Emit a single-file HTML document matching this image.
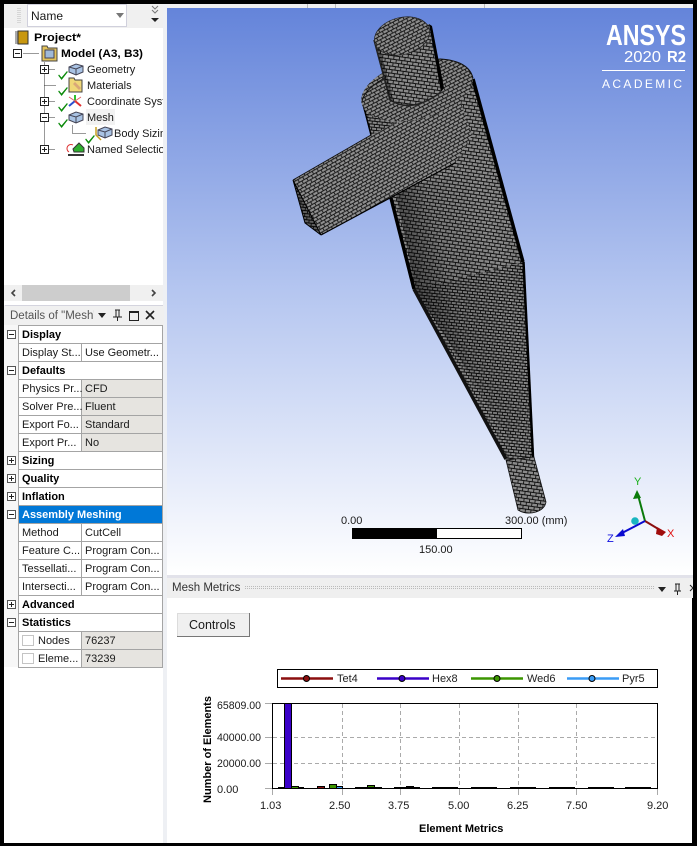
<!DOCTYPE html>
<html><head><meta charset="utf-8"><style>
html,body{margin:0;padding:0;background:#000;width:697px;height:846px;overflow:hidden}
svg{display:block}
text{font-family:"Liberation Sans",sans-serif;font-size:11px;fill:#1a1a1a}
.b{font-weight:bold;fill:#000}
</style></head><body>
<svg width="697" height="846" viewBox="0 0 697 846" xmlns="http://www.w3.org/2000/svg">
<defs>
<linearGradient id="bg" x1="0" y1="0" x2="0" y2="1"><stop offset="0" stop-color="#6484da"/><stop offset=".5" stop-color="#b5c6f0"/><stop offset="1" stop-color="#ffffff"/></linearGradient>
<pattern id="m" width="5.5" height="6.4" patternUnits="userSpaceOnUse" patternTransform="rotate(-14)">
<rect width="5.5" height="6.4" fill="#8c8c8c"/><rect width="5.5" height=".9" fill="#111"/><rect y="3.2" width="5.5" height=".9" fill="#111"/><rect x="0" width=".9" height="3.2" fill="#111"/><rect x="2.700" y="3.200" width=".9" height="3.200" fill="#111"/></pattern>
<pattern id="mc" width="5.6" height="7" patternUnits="userSpaceOnUse" patternTransform="rotate(8)">
<rect width="5.6" height="7" fill="#8a8a8a"/><rect width="5.6" height="1" fill="#111"/><rect y="3.5" width="5.6" height="1" fill="#111"/><rect x="0" width=".9" height="3.5" fill="#111"/><rect x="2.800" y="3.500" width=".9" height="3.500" fill="#111"/></pattern>
<pattern id="mi" width="5.5" height="6.4" patternUnits="userSpaceOnUse" patternTransform="rotate(-30)">
<rect width="5.5" height="6.4" fill="#8f8f8f"/><rect width="5.5" height=".9" fill="#111"/><rect y="3.2" width="5.5" height=".9" fill="#111"/><rect x="0" width=".9" height="3.2" fill="#111"/><rect x="2.700" y="3.200" width=".9" height="3.200" fill="#111"/></pattern>
<pattern id="md" width="5" height="6" patternUnits="userSpaceOnUse" patternTransform="rotate(6)">
<rect width="5" height="6" fill="#868686"/><rect width="5" height="1" fill="#0c0c0c"/><rect y="3" width="5" height="1" fill="#0c0c0c"/><rect x="0" width=".9" height="3" fill="#0c0c0c"/><rect x="2.500" y="3" width=".9" height="3" fill="#0c0c0c"/></pattern>
<linearGradient id="sh" gradientUnits="userSpaceOnUse" x1="395" y1="230" x2="525" y2="195"><stop offset="0" stop-color="#000" stop-opacity=".5"/><stop offset=".3" stop-color="#000" stop-opacity=".12"/><stop offset=".7" stop-color="#000" stop-opacity="0"/><stop offset="1" stop-color="#000" stop-opacity=".15"/></linearGradient>
<clipPath id="tree"><rect x="4" y="28" width="159" height="256"/></clipPath>
<clipPath id="dh"><rect x="8" y="305" width="86" height="20"/></clipPath>
<g id="chk"><path d="M0 3.5 L2.5 6.5 L8 0 L8.8 1 L2.6 9 L-.8 4.5Z" fill="#0a8a0a"/></g>
<g id="cube"><path d="M1 3 L8 0 L15 2 L15 8 L8 11 L1 8Z" fill="#a9c3e4" stroke="#445" stroke-width="1"/><path d="M1 3 L8 5 L15 2 M8 5 V11" fill="none" stroke="#445"/></g>
<g id="plus"><rect x=".5" y=".5" width="8" height="8" fill="#fff" stroke="#222"/><path d="M2 4.5H7M4.5 2V7" stroke="#222"/></g>
<g id="minus"><rect x=".5" y=".5" width="8" height="8" fill="#fff" stroke="#222"/><path d="M2 4.5H7" stroke="#222"/></g>
<g id="dplus"><rect x=".5" y=".5" width="8" height="8" fill="#fff" stroke="#555"/><path d="M2 4.5H7M4.5 2V7" stroke="#222"/></g>
<g id="dminus"><rect x=".5" y=".5" width="8" height="8" fill="#fff" stroke="#555"/><path d="M2 4.5H7" stroke="#222"/></g>
</defs>

<!-- frame -->
<rect width="697" height="846" fill="#000"/>
<!-- left panel -->
<rect x="4" y="4" width="163" height="839" fill="#fff"/>
<rect x="4" y="4" width="160" height="24" fill="#f0f0f0"/>
<rect x="27.500" y="4.500" width="99" height="22" fill="#fff" stroke="#d0d0dc"/>
<text x="31" y="20" style="font-size:12px">Name</text>
<path d="M116 13h8l-4 5z" fill="#777"/>
<path d="M18 8v16M20 8v16" stroke="#bbb" stroke-dasharray="1 1"/>
<path d="M152 6l3 3 3-3M152 10l3 3 3-3" fill="none" stroke="#777"/>
<path d="M151 18h8l-4 4z" fill="#222"/>
<rect x="163" y="4" width="4" height="839" fill="#eef0f4"/>

<!-- tree -->
<g clip-path="url(#tree)">
<path d="M44 58V145M23 53H39M49 69H54M44 85H56M49 101H54M49 117H54M49 149H54M72 125V133H86" stroke="#333" stroke-dasharray="1 1" fill="none" transform="translate(.5 .5)"/>
<rect x="15" y="31" width="3" height="13" fill="#aaa"/><rect x="18" y="31" width="10" height="13" fill="#c8970f" stroke="#333"/>
<text x="34" y="41" class="b" textLength="47" lengthAdjust="spacingAndGlyphs">Project*</text>
<use href="#minus" x="13" y="49"/>
<path d="M42 46h5l1 2h9v13H42z" fill="#e3c25a" stroke="#444"/><rect x="45" y="50" width="9" height="8" fill="#9fb9d8" stroke="#445"/>
<text x="61" y="57" class="b" textLength="82" lengthAdjust="spacingAndGlyphs">Model (A3, B3)</text>
<use href="#plus" x="40" y="65"/><use href="#chk" x="59" y="71"/><use href="#cube" x="68" y="64"/>
<text x="87" y="73">Geometry</text>
<use href="#chk" x="59" y="87"/><path d="M69 78h5l1 2h7v12H69z" fill="#f0d878" stroke="#444"/><path d="M73 84l6 6 2-2-6-6z" fill="#d9a878"/>
<text x="87" y="89">Materials</text>
<use href="#plus" x="40" y="97"/><use href="#chk" x="59" y="103"/>
<path d="M75 101V95" stroke="#2ec02e" stroke-width="2"/><path d="M75 101L69 106" stroke="#2b4fd0" stroke-width="2"/><path d="M75 101L81 106" stroke="#e03030" stroke-width="2"/><path d="M75 101L69 97M75 101L81 97" stroke="#d66" stroke-width="1"/>
<text x="87" y="105">Coordinate Syst</text>
<rect x="86" y="109" width="29" height="16" fill="#f2f2f2"/>
<use href="#minus" x="40" y="113"/><use href="#chk" x="59" y="119"/><use href="#cube" x="68" y="112"/>
<text x="87" y="121">Mesh</text>
<use href="#chk" x="86" y="135"/><path d="M96 127v8l5 5" fill="none" stroke="#c8a020" stroke-width="1.5"/><use href="#cube" x="97" y="127"/>
<text x="114" y="137">Body Sizing</text>
<use href="#plus" x="40" y="145"/>
<path d="M73 149l6-6 5 5v4H74z" fill="#2eae2e" stroke="#333"/><path d="M69 152a4 4 0 0 1 4-7" fill="none" stroke="#d33"/><path d="M68 155h16" stroke="#333" stroke-width="2"/>
<text x="87" y="153">Named Selection</text>
</g>

<!-- scrollbar -->
<rect x="4" y="285" width="159" height="16" fill="#f0f0f0"/>
<rect x="22" y="285" width="108" height="16" fill="#cdcdcd"/>
<path d="M15 290l-3 3 3 3M152 290l3 3-3 3" fill="none" stroke="#444" stroke-width="1.6"/>

<!-- details header -->
<rect x="4" y="305" width="160" height="20" fill="#f0f0f0"/>
<path d="M5 305.500H163" stroke="#d4d4de"/>
<g clip-path="url(#dh)"><text x="10" y="319" style="fill:#555;font-size:11.5px">Details of "Mesh"</text></g>
<path d="M98 313h8l-4 5z" fill="#222"/>
<path d="M115 310h5M116 310v7h3v-7M113 317h9M117.500 317v4" fill="none" stroke="#222"/>
<rect x="129.500" y="311.500" width="9" height="9" fill="none" stroke="#222"/><path d="M129 312.500h10" stroke="#222"/>
<path d="M146 311l8 8M154 311l-8 8" stroke="#222" stroke-width="1.6"/>
<rect x="4" y="325" width="14" height="342" fill="#f7f7f7"/>

<!-- details table -->
<g>
<rect x="18" y="325" width="145" height="342" fill="#fff"/>
<rect x="81" y="379" width="82" height="72" fill="#e6e4e0"/>
<rect x="81" y="631" width="82" height="36" fill="#e6e4e0"/>
<rect x="18" y="505" width="145" height="18" fill="#0078d7"/>
<path d="M18 325.500H163M18 343.500H163M18 361.500H163M18 379.500H163M18 397.500H163M18 415.500H163M18 433.500H163M18 451.500H163M18 469.500H163M18 487.500H163M18 505.500H163M18 523.500H163M18 541.500H163M18 559.500H163M18 577.500H163M18 595.500H163M18 613.500H163M18 631.500H163M18 649.500H163M18 667.500H163M18.500 325V667M162.500 325V667M81.500 343V361M81.500 379V451M81.500 523V595M81.500 631V667" stroke="#a4a4a4" fill="none"/>
<g>
<text x="22" y="338" class="b">Display</text><text x="22" y="374" class="b">Defaults</text>
<text x="22" y="464" class="b">Sizing</text><text x="22" y="482" class="b">Quality</text><text x="22" y="500" class="b">Inflation</text>
<text x="22" y="518" class="b" style="fill:#fff">Assembly Meshing</text>
<text x="22" y="608" class="b">Advanced</text><text x="22" y="626" class="b">Statistics</text>
</g>
<text x="22" y="356">Display St...</text><text x="85" y="356">Use Geometr...</text>
<text x="22" y="392">Physics Pr...</text><text x="85" y="392">CFD</text>
<text x="22" y="410">Solver Pre...</text><text x="85" y="410">Fluent</text>
<text x="22" y="428">Export Fo...</text><text x="85" y="428">Standard</text>
<text x="22" y="446">Export Pr...</text><text x="85" y="446">No</text>
<text x="22" y="536">Method</text><text x="85" y="536">CutCell</text>
<text x="22" y="554">Feature C...</text><text x="85" y="554">Program Con...</text>
<text x="22" y="572">Tessellati...</text><text x="85" y="572">Program Con...</text>
<text x="22" y="590">Intersecti...</text><text x="85" y="590">Program Con...</text>
<rect x="22.500" y="635.500" width="11" height="10" fill="#fff" stroke="#c4c4c4"/><text x="38" y="644">Nodes</text><text x="85" y="644">76237</text>
<rect x="22.500" y="653.500" width="11" height="10" fill="#fff" stroke="#c4c4c4"/><text x="38" y="662">Eleme...</text><text x="85" y="662">73239</text>
<use href="#dminus" x="7" y="330"/><use href="#dminus" x="7" y="366"/><use href="#dplus" x="7" y="456"/><use href="#dplus" x="7" y="474"/><use href="#dplus" x="7" y="492"/><use href="#dminus" x="7" y="510"/><use href="#dplus" x="7" y="600"/><use href="#dminus" x="7" y="618"/>
</g>

<!-- viewport -->
<rect x="167" y="4" width="526" height="4" fill="#f0f0f0"/>
<path d="M307.500 4v4M335.500 4v4M484.500 4v4" stroke="#bbb"/>
<rect x="167" y="8" width="526" height="567" fill="url(#bg)"/>

<!-- geometry: cylinder and cone body -->
<path d="M473 78 L524 262 L534 457 L506 460 L413 290 L390 197 L371 135 L362 102Z" fill="url(#mc)"/>
<path d="M524 262 L534 457 L506 460 L413 290 Z" fill="url(#md)"/>
<path d="M395 190 L470 170 L524 262 L532 400 L510 440 L416 290Z" fill="url(#sh)"/>
<path d="M473 79 L523 262" fill="none" stroke="#000" stroke-width="3.500"/>
<path d="M523.500 262 L533 457" fill="none" stroke="#000" stroke-width="2.500"/>
<path d="M391 198 L414 289" fill="none" stroke="#000" stroke-width="3.500"/>
<path d="M414 289 L506 459" fill="none" stroke="#111" stroke-width="3.500"/>
<!-- neck -->
<path d="M506 460 L534 457 L546 502 Q545 509 536 512 Q526 515 518 510Z" fill="url(#mc)" stroke="#111" stroke-width=".8"/>
<!-- under flange -->
<path d="M362 104 L371 135 L392 127 L392 112Z" fill="url(#md)"/>
<path d="M363 104 L371 135" stroke="#000" stroke-width="1.500"/>
<!-- inlet -->
<path d="M293 180 L371 135 L392 125 L460 100 L472 135 L455 163 L321 235Z" fill="url(#mi)"/>
<path d="M293 180 L371 135" fill="none" stroke="#111"/>
<path d="M321 235 L455 163" fill="none" stroke="#000" stroke-width="1.200"/>
<path d="M293 180 L305 223 L321 235Z" fill="url(#md)" stroke="#000" stroke-width="1"/>
<path d="M293 180 L305 223 L321 235Z" fill="#000" opacity=".3"/>
<!-- flange -->
<ellipse cx="417" cy="90" rx="57" ry="29" transform="rotate(-14 417 90)" fill="url(#m)"/>
<path d="M362 102 C364 86 395 68 440 59 C458 60 470 66 473 78" fill="none" stroke="#111" stroke-width="1"/>
<!-- outlet cylinder -->
<path d="M374 40 L390 100 Q412 114 441 92 L429 24Z" fill="url(#mc)"/>
<path d="M374 40 L390 100 Q412 114 441 92" fill="none" stroke="#222" stroke-width="1.500"/>
<path d="M429 24 L441 92 L444 88 L432 26Z" fill="#000"/>
<path d="M376 44 L390 100 L394 102 L380 48Z" fill="#000" opacity=".4"/>
<ellipse cx="402" cy="36" rx="28" ry="18.500" transform="rotate(-14 402 36)" fill="url(#m)" stroke="#222" stroke-width=".7"/>

<!-- ansys logo -->
<text x="606" y="45" textLength="80" lengthAdjust="spacingAndGlyphs" style="font-size:29px;font-weight:bold;fill:#fff">ANSYS</text>
<text x="624" y="62" textLength="37" lengthAdjust="spacingAndGlyphs" style="font-size:16px;fill:#fff">2020</text>
<text x="667" y="62" textLength="19" lengthAdjust="spacingAndGlyphs" style="font-size:16px;font-weight:bold;fill:#fff">R2</text>
<rect x="602" y="70" width="83" height="1" fill="#fff"/>
<text x="602" y="88" textLength="80" style="font-size:12px;fill:#fff">ACADEMIC</text>

<!-- scale -->
<text x="341" y="524">0.00</text>
<text x="505" y="524">300.00 (mm)</text>
<text x="419" y="553">150.00</text>
<rect x="352.500" y="528.500" width="169" height="10" fill="#fff" stroke="#000"/>
<rect x="352" y="528" width="85" height="11" fill="#000"/>

<!-- triad -->
<path d="M645 521L638 495" stroke="#0a7a0a" stroke-width="2"/><path d="M637 490l-4 9 8-1z" fill="#0a7a0a"/>
<path d="M645 521L660 530" stroke="#8b1010" stroke-width="2"/><path d="M666 532l-9-5-1 7 6 2z" fill="#a00c0c"/>
<path d="M645 521L622 533" stroke="#0a0ad0" stroke-width="2"/><path d="M615 537l10-1-2-7z" fill="#0a0ad0"/>
<circle cx="635" cy="521" r="3.800" fill="#19b5c0"/>
<text x="634" y="485" style="fill:#1ab01a">Y</text>
<text x="667" y="537" style="fill:#e01010">X</text>
<text x="607" y="542" style="fill:#1010e0">Z</text>

<!-- bottom panel -->
<rect x="167" y="575" width="526" height="3" fill="#e2e2ea"/>
<rect x="167" y="578" width="526" height="20" fill="#efefef"/>
<text x="172" y="591" style="font-size:11.5px;fill:#333">Mesh Metrics</text>
<path d="M245 586.500H655M245 588.500H655" stroke="#bbb" stroke-dasharray="1 1"/>
<path d="M658 587h8l-4 5z" fill="#222"/>
<path d="M675 584h5M676 584v7h3v-7M674 591h7M677.500 591v4" fill="none" stroke="#222"/>
<path d="M690 585l3 3M690 591l3-3" stroke="#222"/>
<rect x="167" y="598" width="525" height="245" fill="#fff"/>

<!-- controls button -->
<rect x="177" y="613" width="73" height="24" fill="#f0f0f0"/>
<path d="M249.500 613V636.500H177" fill="none" stroke="#777" stroke-width="1"/>
<path d="M177 613.500H249M177.500 613V636" stroke="#dcdcdc"/>
<text x="189" y="629" style="font-size:12.500px">Controls</text>

<!-- legend -->
<rect x="277.500" y="669.500" width="380" height="18" fill="#fff" stroke="#000"/>
<path d="M281 678.500H333" stroke="#8b0f0f" stroke-width="2.500"/><circle cx="306.500" cy="678.500" r="3" fill="#8b0f0f" stroke="#000"/>
<text x="337" y="682" style="fill:#222">Tet4</text>
<path d="M377 678.500H429" stroke="#3a00c8" stroke-width="2.500"/><circle cx="402" cy="678.500" r="3" fill="#3a00c8" stroke="#000"/>
<text x="432" y="682" style="fill:#222">Hex8</text>
<path d="M471 678.500H523" stroke="#3c9600" stroke-width="2.500"/><circle cx="497" cy="678.500" r="3" fill="#3c9600" stroke="#000"/>
<text x="527" y="682" style="fill:#222">Wed6</text>
<path d="M567 678.500H619" stroke="#3a9cf5" stroke-width="2.500"/><circle cx="592" cy="678.500" r="3" fill="#3a9cf5" stroke="#000"/>
<text x="622" y="682" style="fill:#222">Pyr5</text>

<!-- chart -->
<rect x="272.500" y="703.500" width="385" height="85" fill="#fff" stroke="#000"/>
<path d="M342.500 704V788M400.500 704V788M459.500 704V788M518.500 704V788M576.500 704V788M273 737.500H657M273 763.500H657" stroke="#aaa" stroke-dasharray="4 3"/>
<path d="M265 703.500H272M265 737.500H272M265 763.500H272M265 788.500H272M272.500 789V795M342.500 789V795M400.500 789V795M459.500 789V795M518.500 789V795M576.500 789V795M657.500 789V795" stroke="#aaa"/>
<rect x="284.500" y="703.500" width="7" height="85" fill="#3a00c8" stroke="#000"/>
<rect x="291.500" y="786.500" width="7" height="2" fill="#3c9600" stroke="#000"/>
<rect x="317.500" y="786.500" width="7" height="2" fill="#8b0f0f" stroke="#000"/>
<rect x="329.500" y="784.500" width="7" height="4" fill="#3c9600" stroke="#000"/>
<rect x="336.500" y="786.500" width="6" height="2" fill="#3a9cf5" stroke="#000"/>
<rect x="367.500" y="785.500" width="7" height="3" fill="#3c9600" stroke="#000"/>
<rect x="406.500" y="786.500" width="7" height="2" fill="#3c9600" stroke="#000"/>
<path d="M278 788H284M298 788H304M355 788H382M394 788H420M432 788H458M471 788H497M510 788H536M549 788H575M588 788H614M625 788H651" stroke="#000" stroke-width="2"/>
<text x="217" y="709" textLength="44" lengthAdjust="spacingAndGlyphs">65809.00</text>
<text x="217" y="741" textLength="44" lengthAdjust="spacingAndGlyphs">40000.00</text>
<text x="217" y="767" textLength="44" lengthAdjust="spacingAndGlyphs">20000.00</text>
<text x="217" y="793">0.00</text>
<text x="260" y="809">1.03</text>
<text x="329" y="809">2.50</text>
<text x="388" y="809">3.75</text>
<text x="448" y="809">5.00</text>
<text x="507" y="809">6.25</text>
<text x="566" y="809">7.50</text>
<text x="647" y="809">9.20</text>
<text x="419" y="832" class="b">Element Metrics</text>
<text transform="translate(211 803) rotate(-90)" class="b">Number of Elements</text>
</svg>
</body></html>
